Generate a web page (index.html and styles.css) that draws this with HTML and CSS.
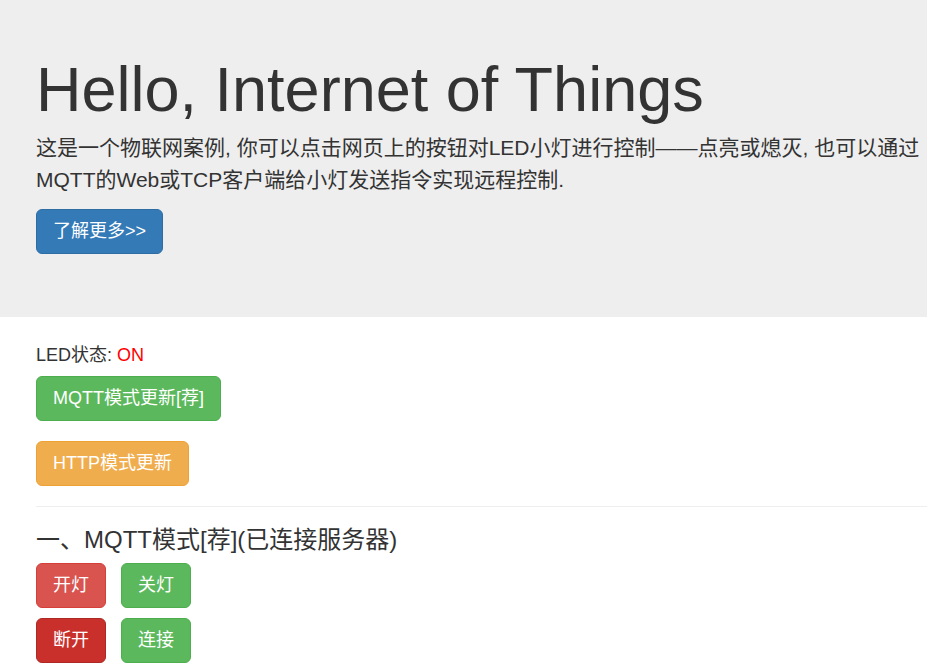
FILE: index.html
```html
<!DOCTYPE html>
<html lang="zh-CN">
  <head>
    <meta charset="utf-8">
    <title>Hello, Internet of Things</title>
    <link rel="stylesheet" href="styles.css">
  </head>
  <body>
    <div class="jumbotron">
      <div class="container">
        <h1>Hello, Internet of Things</h1>
        <p class="lead">这是一个物联网案例, 你可以点击网页上的按钮对LED小灯进行控制——点亮或熄灭, 也可以通过MQTT的Web或TCP客户端给小灯发送指令实现远程控制.</p>
        <p class="more"><a class="btn btn-primary" href="#">了解更多&gt;&gt;</a></p>
      </div>
    </div>
    <div class="container main">
      <p class="status">LED状态: <span class="on">ON</span></p>
      <p class="row"><button class="btn btn-success">MQTT模式更新[荐]</button></p>
      <p class="row"><button class="btn btn-warning">HTTP模式更新</button></p>
      <hr>
      <h3>一、MQTT模式[荐](已连接服务器)</h3>
      <div class="pair">
        <button class="btn btn-danger">开灯</button>
        <button class="btn btn-success">关灯</button>
      </div>
      <div class="pair">
        <button class="btn btn-danger active">断开</button>
        <button class="btn btn-success">连接</button>
      </div>
    </div>
  </body>
</html>
```

FILE: styles.css
```css
html { background: #fff; }
body { margin: 0; color: #333; font-family: "Liberation Sans", Arial, "Noto Sans CJK SC", sans-serif; font-size: 16px; line-height: 1.42857; overflow: hidden; }
.container { padding: 0 0 0 36px; }

.jumbotron { background: #eee; padding: 55px 0 63px; }
.jumbotron h1 { margin: 0 0 8px; font-size: 63px; font-weight: 400; line-height: 69px; white-space: nowrap; }
.jumbotron .lead { margin: 0 0 13px; font-size: 21px; line-height: 32px; width: 900px; }
.jumbotron .more { display: flex; margin: 0; }

.btn { display: inline-block; box-sizing: border-box; height: 45px; padding: 10px 16px; font-family: inherit; font-size: 18px; line-height: 23px; color: #fff; text-decoration: none; border: 1px solid transparent; border-radius: 6px; cursor: pointer; }
.btn-primary { background: #337ab7; border-color: #2e6da4; }
.btn-success { background: #5cb85c; border-color: #4cae4c; }
.btn-warning { background: #f0ad4e; border-color: #eea236; }
.btn-danger { background: #d9534f; border-color: #d43f3a; }
.btn-danger.active { background: #c9302c; border-color: #ac2925; }

.main { padding-top: 26px; }
.status { margin: 0 0 9px; font-size: 18px; line-height: 24px; }
.on { color: #f00; }
.row { display: flex; margin: 0 0 20px; }
hr { margin: 0 0 18px 0; border: 0; border-top: 1px solid #eee; }
h3 { margin: 0 0 8px; font-size: 24px; font-weight: 400; line-height: 30px; }
.pair { display: flex; gap: 15px; margin-bottom: 10px; }
```
